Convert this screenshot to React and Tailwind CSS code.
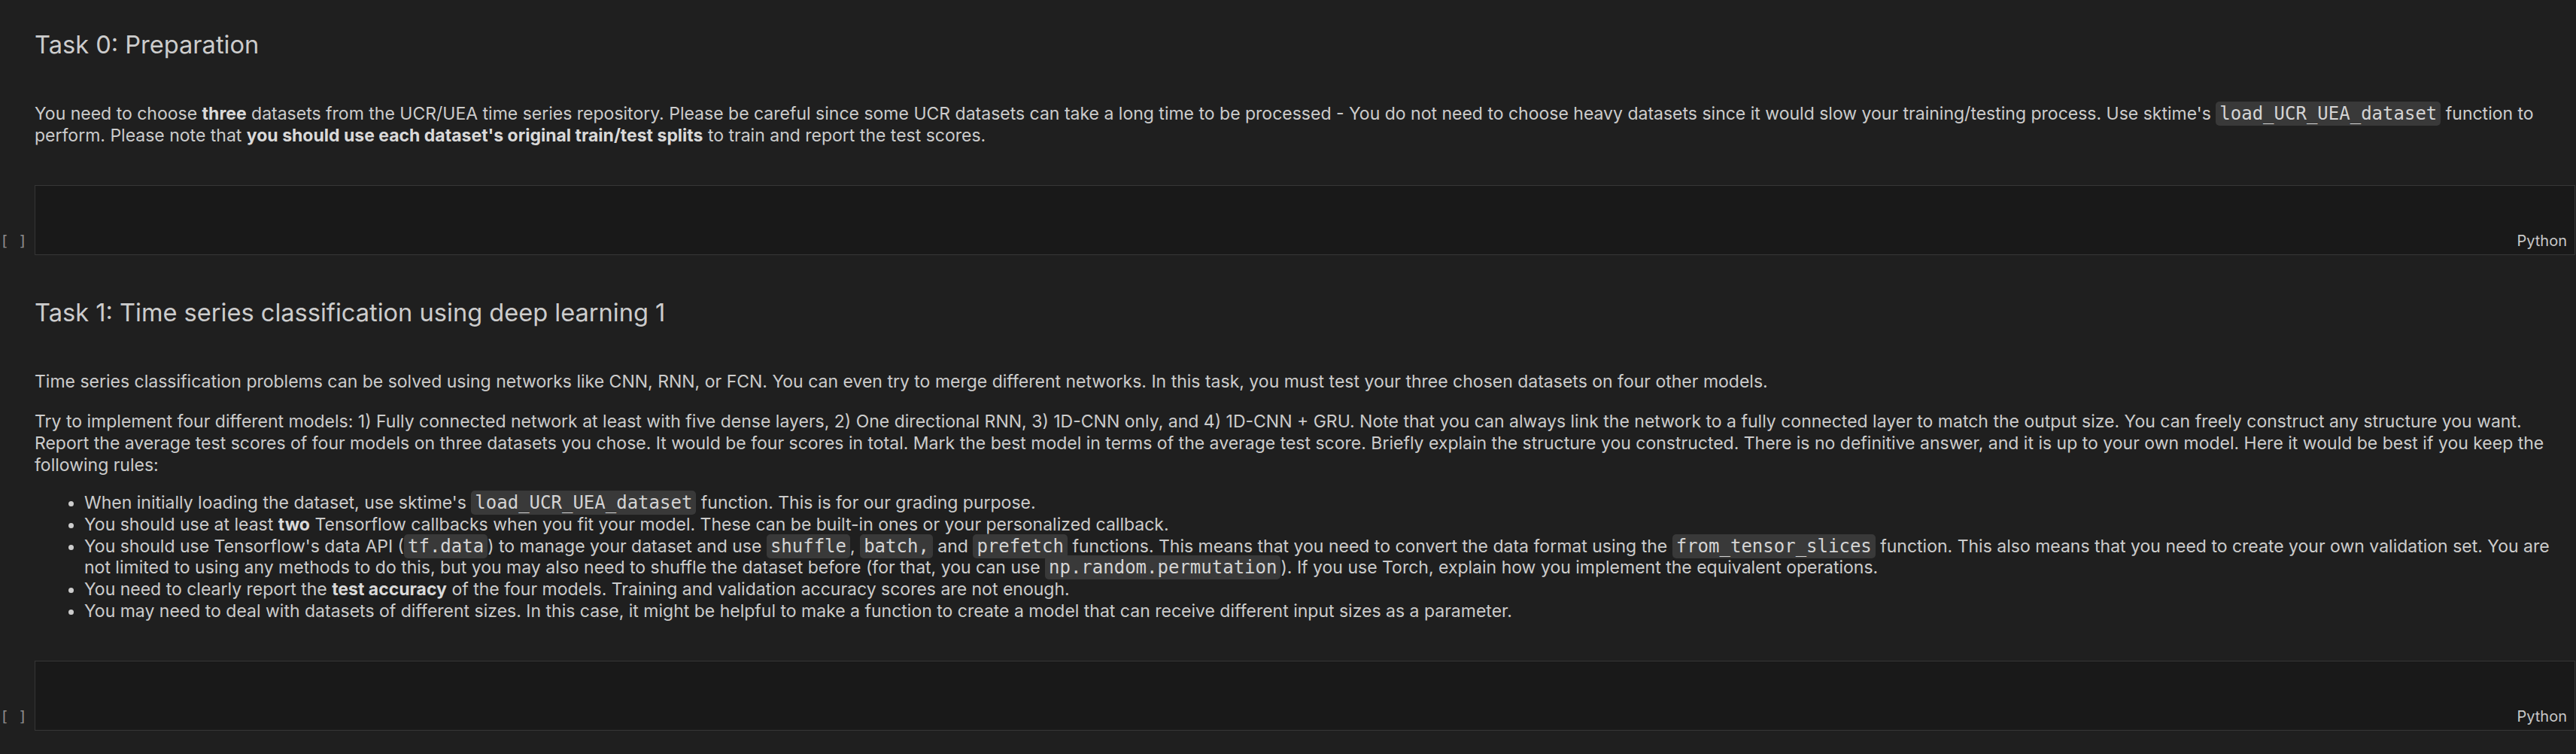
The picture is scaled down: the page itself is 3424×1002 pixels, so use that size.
import React from 'react';

const BODY = "font-['Inter',sans-serif] text-[23px] leading-[28.7px] text-[#cccccc]";

function Code({ children }) {
  return (
    <code className="rounded-[5px] bg-[#393939] px-[5px] py-[2px] font-['DejaVu_Sans_Mono',monospace] text-[24px] leading-none text-[#d4d4d4]">
      {children}
    </code>
  );
}

function B({ children }) {
  return <b className="font-bold text-[#d9d9d9]">{children}</b>;
}

function Line({ children }) {
  return <div className="whitespace-nowrap">{children}</div>;
}

function CodeCell({ className = '' }) {
  return (
    <div className={`flex h-[93px] pr-[1px] ${className}`}>
      {/* execution count gutter */}
      <div className="flex w-[46px] shrink-0 items-end pb-[8px] font-['DejaVu_Sans_Mono',monospace] text-[20px] leading-[22px] text-[#8a8a8a]">
        [ ]
      </div>
      <div className="flex flex-1 items-end justify-end border border-[#363636] bg-[#191919] px-[10px] pb-[6px]">
        <span className="font-['Inter',sans-serif] text-[20px] leading-[24px] text-[#c8c8c8]">Python</span>
      </div>
    </div>
  );
}

function Heading({ children, className = '' }) {
  return (
    <h2 className={`pl-[46px] font-['Inter',sans-serif] text-[32.6px] font-normal leading-[40px] text-[#cccccc] ${className}`}>
      {children}
    </h2>
  );
}

export default function App() {
  return (
    <div className="h-[1002px] w-full overflow-hidden bg-[#1f1f1f] pt-[39px]">
      {/* Task 0 */}
      <Heading>Task 0: Preparation</Heading>
      <div className={`mt-[58px] pl-[46px] ${BODY}`}>
        <Line>
          You need to choose <B>three</B> datasets from the UCR/UEA time series repository. Please be careful since some UCR datasets can take a long time to be processed - You do not need to choose heavy datasets since it would slow your training/testing process. Use sktime's <Code>load_UCR_UEA_dataset</Code> function to
        </Line>
        <Line>
          perform. Please note that <B>you should use each dataset's original train/test splits</B> to train and report the test scores.
        </Line>
      </div>

      <CodeCell className="mt-[52px]" />

      {/* Task 1 */}
      <Heading className="mt-[56px]">Task 1: Time series classification using deep learning 1</Heading>
      <div className={`mt-[58px] pl-[46px] ${BODY}`}>
        <Line>
          Time series classification problems can be solved using networks like CNN, RNN, or FCN. You can even try to merge different networks. In this task, you must test your three chosen datasets on four other models.
        </Line>
      </div>
      <div className={`mt-[24px] pl-[46px] ${BODY}`}>
        <Line>
          Try to implement four different models: 1) Fully connected network at least with five dense layers, 2) One directional RNN, 3) 1D-CNN only, and 4) 1D-CNN + GRU. Note that you can always link the network to a fully connected layer to match the output size. You can freely construct any structure you want.
        </Line>
        <Line>
          Report the average test scores of four models on three datasets you chose. It would be four scores in total. Mark the best model in terms of the average test score. Briefly explain the structure you constructed. There is no definitive answer, and it is up to your own model. Here it would be best if you keep the
        </Line>
        <Line>following rules:</Line>
      </div>

      <ul className={`mt-[22px] list-disc pl-[112px] ${BODY}`}>
        <li>
          <Line>
            When initially loading the dataset, use sktime's <Code>load_UCR_UEA_dataset</Code> function. This is for our grading purpose.
          </Line>
        </li>
        <li>
          <Line>
            You should use at least <B>two</B> Tensorflow callbacks when you fit your model. These can be built-in ones or your personalized callback.
          </Line>
        </li>
        <li>
          <Line>
            You should use Tensorflow's data API (<Code>tf.data</Code>) to manage your dataset and use <Code>shuffle</Code>, <Code>batch,</Code> and <Code>prefetch</Code> functions. This means that you need to convert the data format using the <Code>from_tensor_slices</Code> function. This also means that you need to create your own validation set. You are
          </Line>
          <Line>
            not limited to using any methods to do this, but you may also need to shuffle the dataset before (for that, you can use <Code>np.random.permutation</Code>). If you use Torch, explain how you implement the equivalent operations.
          </Line>
        </li>
        <li>
          <Line>
            You need to clearly report the <B>test accuracy</B> of the four models. Training and validation accuracy scores are not enough.
          </Line>
        </li>
        <li>
          <Line>
            You may need to deal with datasets of different sizes. In this case, it might be helpful to make a function to create a model that can receive different input sizes as a parameter.
          </Line>
        </li>
      </ul>

      <CodeCell className="mt-[52px]" />
    </div>
  );
}
